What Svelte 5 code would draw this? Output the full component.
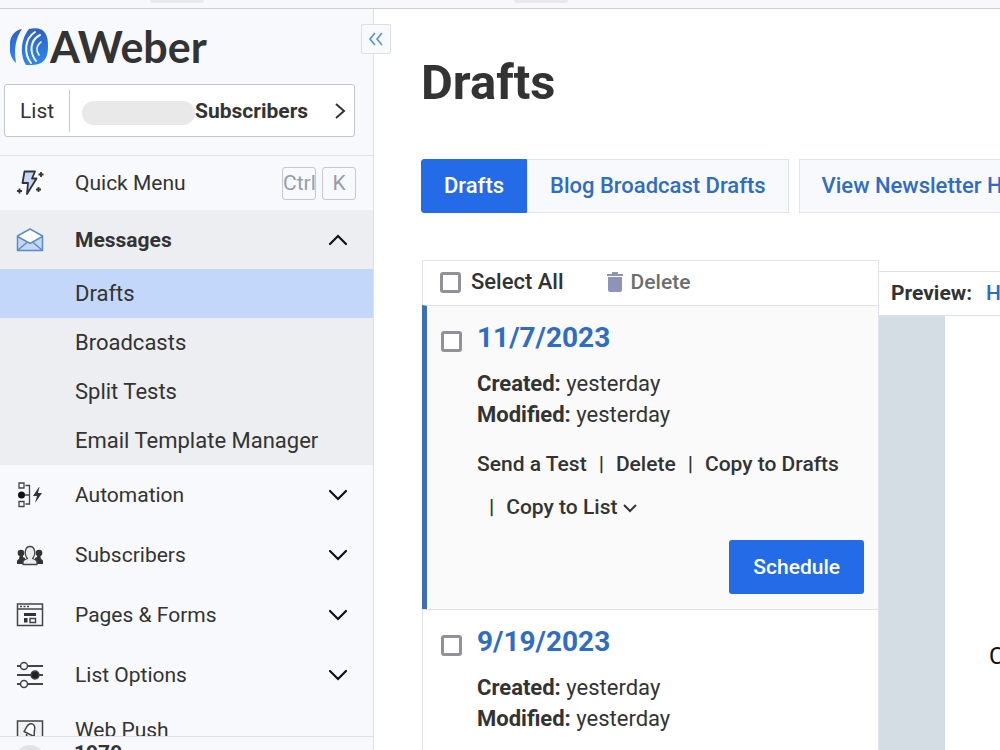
<script lang="ts">
	let messagesOpen = $state(true);
	let activePage = $state('Drafts');
	let selectAll = $state(false);

	const messagePages = ['Drafts', 'Broadcasts', 'Split Tests', 'Email Template Manager'];

	const sections = [
		{ icon: 'automation', label: 'Automation' },
		{ icon: 'subscribers', label: 'Subscribers' },
		{ icon: 'pages', label: 'Pages & Forms' },
		{ icon: 'options', label: 'List Options' },
	];

	const drafts = [
		{ title: '11/7/2023', created: 'yesterday', modified: 'yesterday', selected: true },
		{ title: '9/19/2023', created: 'yesterday', modified: 'yesterday', selected: false },
	];
</script>

{#snippet chevron(up: boolean)}
	<svg class="chevron" class:up width="20" height="12" viewBox="0 0 20 12" aria-hidden="true">
		<path d="M2 2l8 8 8-8" fill="none" stroke="#111" stroke-width="2.2" stroke-linecap="round" />
	</svg>
{/snippet}

{#snippet icon(name: string)}
	<svg class="icon" width="28" height="28" viewBox="0 0 28 28" fill="none" stroke="#444" stroke-width="1.5" aria-hidden="true">
		{#if name === 'quick'}
			<path d="M8.5 2.5h10.500l-3 7h4.500L11 25l1-11H6.500z" fill="#c3d7fb" stroke="#333" stroke-width="1.800" stroke-linejoin="round" />
			<path d="M25 3v5M22.500 5.500h5M22.500 18v5M20 20.500h5M3.500 19.500v5M1 22h5" stroke="#333" stroke-width="1.800" />
		{:else if name === 'messages'}
			<path d="M1.500 10L14 3l12.500 7v14.500h-25z" fill="#c3d7fb" stroke="#5a8cc4" stroke-linejoin="round" />
			<path d="M2.500 10.500L14 4l11.500 6.500L14 17z" fill="#fff" stroke="none" />
			<path d="M1.500 10.500L14 17.500l12.500-7M2 24l9.500-8M26 24l-9.500-8" stroke="#5a8cc4" />
		{:else if name === 'automation'}
			<path d="M3 2h5v5H3zM3 20.500h5v5H3zM9.500 4.500h4v18.500h-4M9 14h4.500" stroke-width="1.300" />
			<circle cx="5.500" cy="14" r="3.500" fill="#111" stroke="none" />
			<path d="M23 6l-6 9h4l-2 7 7-10h-4l1.500-6z" fill="#333" stroke="none" />
		{:else if name === 'subscribers'}
			<g fill="#333" stroke="none">
				<circle cx="5" cy="12" r="3.300" />
				<path d="M4 13h3v3l2 1v6H1v-3q0-1 2-2z" />
				<circle cx="23" cy="12" r="3.300" />
				<path d="M24 13h-3v3l-2 1v6h8v-3q0-1-2-2z" />
			</g>
			<path d="M7 23.500V21q0-2 4.500-3.500C8 14 8.500 5.500 14 5.500s6 8.500 2.500 12Q21 19 21 21v2.500z" fill="#ececf0" stroke-width="1.300" stroke-linejoin="round" />
		{:else if name === 'pages'}
			<path d="M1.500 3h25v21.500h-25zM2 8h24" />
			<path d="M4 5.500h2M7.500 5.500h2M11 5.500h2" stroke-width="1.600" />
			<path d="M8 13.500h12" stroke="#333" stroke-width="3" />
			<path d="M8 17h3.500v4.500H8z" fill="#333" stroke="none" />
			<path d="M14 17.500h5.500v4H14z" />
		{:else if name === 'options'}
			<path d="M1 5h26M1 14h26M1 23h26" stroke-width="1.800" />
			<circle cx="8" cy="5" r="3.500" fill="#f8f9fd" />
			<circle cx="19" cy="14" r="4" fill="#222" />
			<circle cx="8" cy="23" r="3.500" fill="#f8f9fd" />
		{:else if name === 'push'}
			<path d="M1.500 5h25v21h-25z" fill="#f0f1f4" />
			<path d="M8 15.500c2-2 2-6 5.500-7.500 4-1 6 2 5 6-.5 2 0 4-.5 6.500z" fill="#fff" stroke-linejoin="round" />
			<path d="M10.500 18c0 3 2 4 4 2.500" />
		{/if}
	</svg>
{/snippet}

<div class="app">
	<div class="topbar">
		<span></span>
		<span></span>
	</div>

	<div class="shell">
		<aside class="sidebar">
			<button class="collapse" aria-label="Collapse menu">
				<svg width="16" height="14" viewBox="0 0 16 14" fill="none" stroke="#5b96cf" stroke-width="1.700">
					<path d="M7 1L2 7l5 6M14 1L9 7l5 6" />
				</svg>
			</button>

			<a class="logo" href="#home">
				<svg width="40" height="40" viewBox="0 0 40 40" aria-hidden="true">
					<defs>
						<linearGradient id="mark" x1="0" y1="0" x2="0" y2="1">
							<stop offset="0" stop-color="#2c62c0" />
							<stop offset="1" stop-color="#2f88f0" />
						</linearGradient>
					</defs>
					<path d="M12 2C-3 4-4 28 6 36 4 24 5 12 12 2z" fill="url(#mark)" />
					<path d="M19 2c15-3 19 5 19 17 0 15-6 20-22 19C10 29 10 13 19 2z" fill="url(#mark)" />
					<g fill="none" stroke="#f8f9fd" stroke-width="2" stroke-linecap="round">
						<path d="M25 5C14 12 14 27 21 36" />
						<path d="M30 8C20 13 19 25 26 34" />
						<path d="M31 15c-5 4-5 9-2 13" stroke-width="1.600" />
					</g>
				</svg>
				<span>AWeber</span>
			</a>

			<button class="list-picker">
				<span class="list-label">List</span>
				<span class="redacted"></span>
				<strong>Subscribers</strong>
				<svg width="12" height="18" viewBox="0 0 12 18" aria-hidden="true">
					<path d="M2 2l8 7-8 7" fill="none" stroke="#333" stroke-width="2" />
				</svg>
			</button>

			<nav>
				<button class="row quick">
					{@render icon('quick')}
					<span class="label">Quick Menu</span>
					<kbd>Ctrl</kbd>
					<kbd>K</kbd>
				</button>

				<div class="group">
					<button class="row open" aria-expanded={messagesOpen} onclick={() => (messagesOpen = !messagesOpen)}>
						{@render icon('messages')}
						<span class="label">Messages</span>
						{@render chevron(messagesOpen)}
					</button>
					{#if messagesOpen}
						{#each messagePages as page}
							<a class="sub" class:active={page === activePage} href="#messages" onclick={() => (activePage = page)}>{page}</a>
						{/each}
					{/if}
				</div>

				{#each sections as section}
					<button class="row">
						{@render icon(section.icon)}
						<span class="label">{section.label}</span>
						{@render chevron(false)}
					</button>
				{/each}

				<button class="row push">
					{@render icon('push')}
					<span class="label">Web Push</span>
				</button>
			</nav>

			<div class="account">
				<span class="avatar"></span>
				<strong>1979</strong>
			</div>
		</aside>

		<main>
			<h1>Drafts</h1>

			<div class="tabs">
				<button class="tab current">Drafts</button>
				<button class="tab">Blog Broadcast Drafts</button>
				<button class="tab separate">View Newsletter History</button>
			</div>

			<div class="columns">
				<section class="drafts">
					<div class="toolbar">
						<label>
							<input type="checkbox" bind:checked={selectAll} />
							Select All
						</label>
						<button class="delete">
							<svg width="16" height="20" viewBox="0 0 16 20" fill="#8c95b8" aria-hidden="true">
								<path d="M5 0h6v2h5v2H0V2h5zM1 5h14v13q0 2-2 2H3q-2 0-2-2z" />
							</svg>
							Delete
						</button>
					</div>

					{#each drafts as draft}
						<article class="draft" class:selected={draft.selected}>
							<input type="checkbox" aria-label="Select {draft.title}" checked={selectAll} />
							<div class="details">
								<h2><a href="#draft">{draft.title}</a></h2>
								<p><strong>Created:</strong> {draft.created}</p>
								<p><strong>Modified:</strong> {draft.modified}</p>
								<div class="actions">
									<button>Send a Test</button>
									<span>|</span>
									<button>Delete</button>
									<span>|</span>
									<button>Copy to Drafts</button>
									<span class="wrapped">|</span>
									<button>
										Copy to List
										<svg width="14" height="10" viewBox="0 0 14 10" aria-hidden="true">
											<path d="M1 1l6 6 6-6" fill="none" stroke="#333" stroke-width="2" />
										</svg>
									</button>
								</div>
								<button class="schedule">Schedule</button>
							</div>
						</article>
					{/each}
				</section>

				<section class="preview">
					<div class="preview-bar">
						<strong>Preview:</strong>
						<a href="#html">HTML</a>
					</div>
					<div class="canvas">
						<div class="paper">C</div>
					</div>
				</section>
			</div>
		</main>
	</div>
</div>

<style>
	:global(body) {
		margin: 0;
		overflow: hidden;
	}

	.app {
		display: flex;
		flex-direction: column;
		height: 100vh;
		font-family: Roboto, 'Liberation Sans', sans-serif;
		font-size: 21px;
		line-height: 30px;
		color: #333;
		background: #fff;
	}

	.app *,
	.app {
		box-sizing: border-box;
	}

	button {
		padding: 0;
		border: 0;
		background: none;
		font: inherit;
		color: inherit;
		cursor: pointer;
	}

	a {
		color: #2f6cc4;
		text-decoration: none;
	}

	svg {
		flex: none;
	}

	.topbar {
		flex: none;
		display: flex;
		gap: 310px;
		height: 9px;
		padding-left: 150px;
		background: #f8f8fc;
		border-bottom: 1px solid #cdcfd4;
	}

	.topbar span {
		width: 54px;
		height: 3px;
		background: #e9e9ec;
		border-radius: 0 0 12px 12px;
	}

	.shell {
		flex: 1;
		display: flex;
		min-height: 0;
	}

	.sidebar {
		position: relative;
		flex: none;
		display: flex;
		flex-direction: column;
		width: 374px;
		background: #f8f9fd;
		border-right: 1px solid #dfe1e8;
	}

	/* sits across the sidebar's right border */
	.collapse {
		position: absolute;
		top: 15px;
		right: -18px;
		display: flex;
		align-items: center;
		justify-content: center;
		width: 30px;
		height: 30px;
		background: #f8f9fd;
		border: 1px solid #dcdfe6;
		border-radius: 2px;
	}

	.logo {
		display: flex;
		align-items: center;
		height: 75px;
		padding-left: 10px;
		font-family: Lato, sans-serif;
		font-size: 43px;
		font-weight: 700;
		color: #333;
	}

	.list-picker {
		display: flex;
		align-items: center;
		height: 53px;
		margin: 0 18px 18px 4px;
		padding: 0 8px 0 0;
		background: #fff;
		border: 1px solid #c2c5d0;
		border-radius: 3px;
		text-align: left;
	}

	.list-label {
		width: 65px;
		padding-left: 15px;
		line-height: 42px;
		border-right: 1px solid #c8cad2;
	}

	.redacted {
		width: 113px;
		height: 24px;
		margin: 4px 0 0 12px;
		background: #e9e9e9;
		border-radius: 12px;
	}

	.list-picker strong {
		flex: 1;
	}

	strong {
		font-weight: 700;
	}

	nav {
		flex: 1;
		min-height: 0;
		overflow: hidden;
		border-top: 1px solid #dfe1e8;
	}

	.row {
		display: flex;
		align-items: center;
		width: 100%;
		height: 60px;
		padding: 0 17px 0 16px;
		text-align: left;
	}

	.row.quick {
		height: 54px;
	}

	.row.open {
		height: 59px;
	}

	.row.push {
		height: 50px;
	}

	.row .label {
		flex: 1;
		margin-left: 31px;
	}

	.row.open .label {
		font-weight: 700;
	}

	.chevron {
		margin-right: 8px;
	}

	.chevron.up {
		transform: rotate(180deg);
	}

	kbd {
		width: 34px;
		height: 33px;
		margin-left: 6px;
		border: 1px solid #c5c8d2;
		border-radius: 3px;
		font-family: inherit;
		font-size: 21px;
		text-align: center;
		color: #969cae;
	}

	.group {
		background: #edeef2;
	}

	.sub {
		display: block;
		padding-left: 75px;
		font-size: 22px;
		line-height: 49px;
		color: #333;
	}

	.sub.active {
		background: #c3d7fb;
	}

	.account {
		display: flex;
		flex: none;
		height: 14px;
		padding: 1px 15px 0;
		overflow: hidden;
		border-top: 1px solid #dfe1e8;
	}

	.avatar {
		flex: none;
		width: 30px;
		height: 30px;
		margin-right: 29px;
		margin-top: 7px;
		background: #e2e3e6;
		border-radius: 50%;
	}

	main {
		flex: 1;
		display: flex;
		flex-direction: column;
		min-width: 0;
		padding: 44px 0 0 47px;
		overflow: hidden;
	}

	h1 {
		margin: 0 0 46px;
		font-size: 49px;
		line-height: 60px;
		font-weight: 700;
	}

	.tabs {
		display: flex;
		flex: none;
		height: 54px;
		margin-bottom: 47px;
	}

	.tab {
		flex: none;
		padding: 0 22px;
		background: #f8f9fd;
		border: 1px solid #dfe3ea;
		font-size: 22px;
		font-weight: 500;
		color: #2f6cc4;
	}

	.tab.current {
		background: #246be8;
		border-color: #246be8;
		border-radius: 3px 0 0 3px;
		color: #fff;
	}

	.tab.separate {
		margin-left: 10px;
	}

	.columns {
		flex: 1;
		display: flex;
		min-height: 0;
		margin-left: 1px;
	}

	.drafts {
		flex: none;
		width: 457px;
		border: 1px solid #e1e4ea;
		border-bottom: 0;
	}

	.toolbar {
		display: flex;
		align-items: center;
		gap: 43px;
		height: 44px;
		padding: 0 0 2px 17px;
		font-size: 22px;
		font-weight: 500;
	}

	.toolbar label,
	.delete {
		display: flex;
		align-items: center;
		gap: 8px;
	}

	.toolbar label {
		gap: 10px;
	}

	.delete {
		color: #6d6d6d;
		font-size: 21px;
		font-weight: 500;
	}

	input[type='checkbox'] {
		appearance: none;
		flex: none;
		width: 21px;
		height: 21px;
		margin: 0;
		background: #fff;
		border: 3px solid #919199;
		border-radius: 3px;
	}

	.draft {
		display: flex;
		gap: 15px;
		height: 304px;
		padding: 15px 14px 0 18px;
		border-top: 1px solid #dfe1e6;
	}

	.draft.selected {
		margin-left: -1px;
		padding-left: 14px;
		background: #fafafa;
		border-left: 5px solid #3b6fba;
	}

	.draft input {
		margin-top: 10px;
	}

	.details {
		flex: 1;
		display: flex;
		flex-direction: column;
	}

	h2 {
		margin: 0 0 13px;
		font-size: 28px;
		line-height: 34px;
		font-weight: 700;
	}

	.details p {
		margin: 0;
		font-size: 22px;
		line-height: 31px;
	}

	.actions {
		display: flex;
		flex-wrap: wrap;
		column-gap: 12px;
		row-gap: 13px;
		margin-top: 19px;
		font-weight: 500;
	}

	.wrapped {
		margin-left: 12px;
	}

	.schedule {
		align-self: flex-end;
		height: 54px;
		margin-top: 18px;
		padding: 0 24px;
		background: #246be8;
		border-radius: 3px;
		font-weight: 500;
		color: #fff;
	}

	.preview {
		flex: 1;
		display: flex;
		flex-direction: column;
		min-width: 0;
		margin-top: 11px;
		overflow: hidden;
	}

	.preview-bar {
		display: flex;
		align-items: center;
		gap: 14px;
		height: 45px;
		padding: 0 0 2px 12px;
		border-top: 1px solid #dfe1e6;
		border-bottom: 1px solid #dfe1e6;
		font-weight: 500;
	}

	.canvas {
		flex: 1;
		display: flex;
		padding-left: 66px;
		background: #d4dde3;
	}

	.paper {
		flex: 1;
		padding: 325px 0 0 44px;
		background: #fff;
		font-size: 24px;
		color: #111;
	}
</style>
